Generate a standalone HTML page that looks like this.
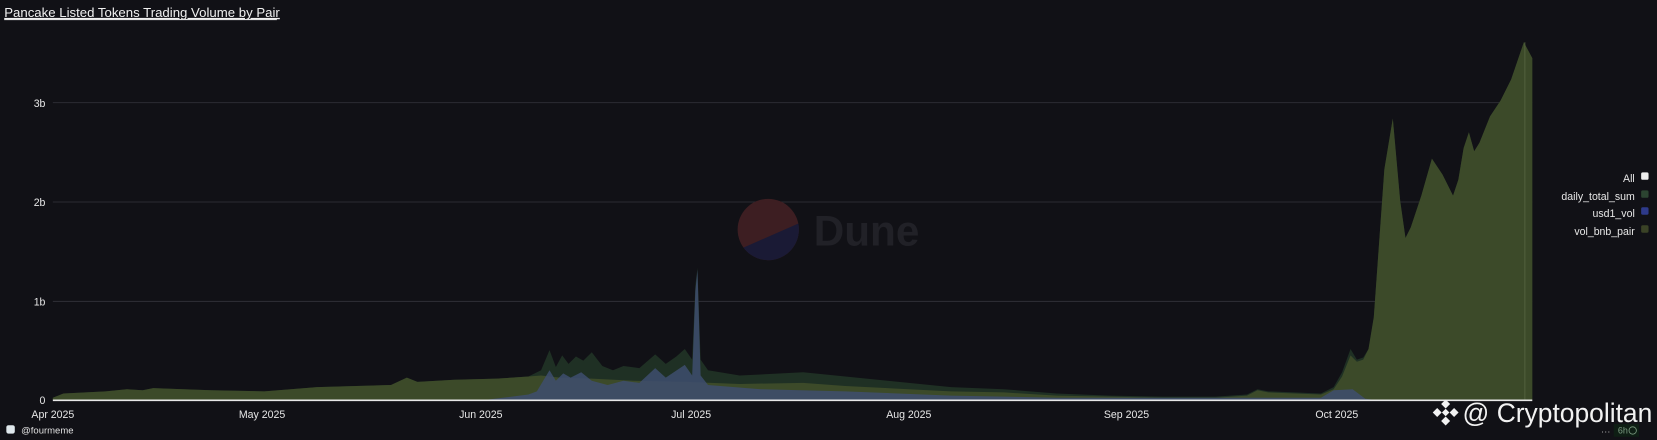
<!DOCTYPE html>
<html><head><meta charset="utf-8"><style>
html,body{margin:0;padding:0;background:#111116;}
svg{display:block}
text{font-family:"Liberation Sans",sans-serif;}
</style></head><body>
<svg width="1657" height="440" viewBox="0 0 1568 416" preserveAspectRatio="none" xmlns="http://www.w3.org/2000/svg">
<rect width="1568" height="416" fill="#111116"/>
<text x="4" y="16" font-size="12.5" fill="#f0f0f0" text-decoration="underline">Pancake Listed Tokens Trading Volume by Pair</text>
<line x1="4" y1="18.5" x2="262" y2="18.5" stroke="#e0e0e0" stroke-width="1"/>
<g stroke="#2c2c33" stroke-width="1">
<line x1="50" y1="97" x2="1450" y2="97"/>
<line x1="50" y1="191" x2="1450" y2="191"/>
<line x1="50" y1="285" x2="1450" y2="285"/>
</g>
<g font-size="10" fill="#e6e6e6" text-anchor="end">
<text x="43" y="101">3b</text><text x="43" y="195">2b</text><text x="43" y="289">1b</text><text x="43" y="382">0</text>
</g>
<!-- Dune watermark -->
<g>
<clipPath id="c"><circle cx="727" cy="217" r="29"/></clipPath>
<g clip-path="url(#c)">
<rect x="690" y="180" width="80" height="80" fill="#3d1e22"/>
<polygon points="690,240 770,205 770,260 690,260" fill="#1a1a35"/>
</g>
<text x="770" y="232" font-size="40" font-weight="bold" fill="#212127">Dune</text>
</g>
<!-- total -->
<path fill="#1f3024" d="M50,378 L50,376 60,372 100,370 120,368 135,369 145,367 200,369 250,370 300,366 370,364 385,357 395,361 430,359 470,358 500,356 512,350 520,331 526,347 532,336 538,344 545,337 552,341 560,333 570,346 580,350 590,346 605,348 620,335 630,344 640,337 648,330 655,340 658,270 660,253 663,340 670,350 700,355 760,352 800,356 860,362 900,366 950,368 1000,372 1050,374 1100,375 1150,375 1180,373 1190,368 1200,370 1250,372 1262,366 1270,352 1278,330 1284,340 1290,338 1295,330 1300,300 1305,230 1310,160 1318,112 1325,190 1330,225 1335,215 1345,185 1355,150 1365,165 1375,185 1380,170 1385,140 1390,125 1395,143 1400,135 1410,110 1420,95 1430,75 1442,40 1450,55 L1450,378 Z"/>
<!-- bnb -->
<path fill="#3c4a29" d="M50,378 L50,376 60,372 100,370 120,368 135,369 145,367 200,369 250,370 300,366 370,364 385,357 395,361 430,359 470,358 500,356 512,355 530,357 560,358 600,360 650,361 700,363 760,362 800,365 860,368 900,370 950,371 1000,374 1050,375 1100,376 1150,376 1180,374 1190,369 1200,371 1250,373 1262,368 1270,356 1278,336 1284,342 1290,340 1295,330 1300,300 1305,230 1310,160 1318,112 1325,190 1330,225 1335,215 1345,185 1355,150 1365,165 1375,185 1380,170 1385,140 1390,125 1395,143 1400,135 1410,110 1420,95 1430,75 1442,40 1450,55 L1450,378 Z"/>
<!-- usd1 -->
<path fill="#3e4d6e" fill-opacity="0.85" d="M460,378 L500,373 508,370 514,360 520,350 526,360 533,353 540,357 550,352 560,360 575,364 590,360 605,362 620,348 630,357 648,345 655,355 658,275 660,255 663,355 670,364 720,368 800,370 900,374 1000,376 1250,376 1262,369 1280,368 1292,377 1300,378 Z"/>
<line x1="1443" y1="40" x2="1443" y2="378" stroke="#5a6a45" stroke-width="0.7"/>
<line x1="50" y1="378.5" x2="1450" y2="378.5" stroke="#e8e8e8" stroke-width="1.5"/>
<g font-size="10" fill="#e6e6e6" text-anchor="middle">
<text x="50" y="395">Apr 2025</text><text x="248" y="395">May 2025</text><text x="455" y="395">Jun 2025</text><text x="654" y="395">Jul 2025</text><text x="860" y="395">Aug 2025</text><text x="1066" y="395">Sep 2025</text><text x="1265" y="395">Oct 2025</text>
</g>
<g font-size="10" fill="#e6e6e6" text-anchor="end">
<text x="1547" y="172">All</text><text x="1547" y="189">daily_total_sum</text><text x="1547" y="205">usd1_vol</text><text x="1547" y="222">vol_bnb_pair</text>
</g>
<rect x="1553" y="163" width="7" height="7" rx="1.5" fill="#eeeeee"/>
<rect x="1553" y="180" width="7" height="7" rx="1.5" fill="#2c4431"/>
<rect x="1553" y="196" width="7" height="7" rx="1.5" fill="#2e3a8a"/>
<rect x="1553" y="213" width="7" height="7" rx="1.5" fill="#3a4226"/>
<rect x="6" y="402" width="8" height="8" rx="2" fill="#dfe8ec"/>
<text x="20" y="410" font-size="9" fill="#e0e0e0">@fourmeme</text>
<!-- Cryptopolitan -->
<g fill="#f2f2f2" transform="translate(1368,390)">
<rect x="-3" y="-11" width="6" height="6" transform="rotate(45 0 -8)"/>
<rect x="-3" y="5" width="6" height="6" transform="rotate(45 0 8)"/>
<rect x="-11" y="-3" width="6" height="6" transform="rotate(45 -8 0)"/>
<rect x="5" y="-3" width="6" height="6" transform="rotate(45 8 0)"/>
<rect x="-2.5" y="-2.5" width="5" height="5" transform="rotate(45 0 0)"/>
</g>
<text x="1384" y="399" font-size="25" fill="#f2f2f2">@ Cryptopolitan</text>
<text x="1515" y="411" font-size="9" fill="#bbbbbb">···</text>
<rect x="1527" y="401" width="24" height="12" fill="#0e1e14"/>
<text x="1531" y="410" font-size="8.5" fill="#7a9a80">6h</text>
<circle cx="1545" cy="407" r="3.5" fill="none" stroke="#7a9a80" stroke-width="0.8"/>
</svg>
</body></html>
